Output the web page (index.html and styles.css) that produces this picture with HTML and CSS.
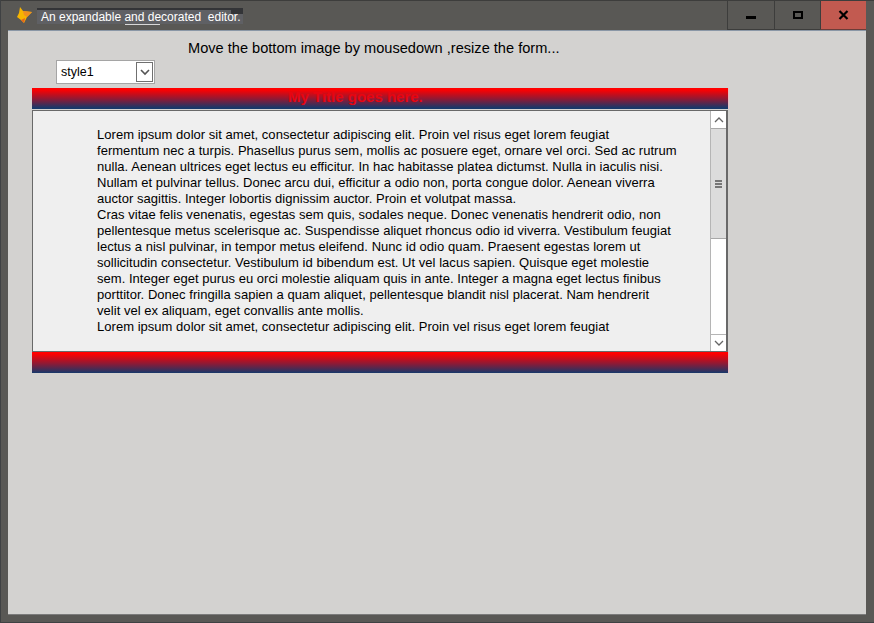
FILE: index.html
```html
<!DOCTYPE html>
<html lang="en">
<head>
<meta charset="utf-8">
<title>An expandable and decorated editor.</title>
<link rel="stylesheet" href="styles.css">
</head>
<body>
<div class="window">
  <header class="titlebar">
    <svg class="app-icon" width="18" height="17" viewBox="0 0 18 17" aria-hidden="true">
      <path d="M4 0 L7 4 L16 5 L11 10 L8 16 L5 13 L1 10 L3 6 Z" fill="#f7b500"/>
      <path d="M7 4 L16 5 L11 10 L8 8 Z" fill="#ef8f1f"/>
      <path d="M5 13 L9 11 L8 16 Z" fill="#e5661c"/>
    </svg>
    <div class="title-wrap"><span class="title-text">An expandable <span class="underlined">and de</span>corated&nbsp; editor.</span></div>
    <div class="controls">
      <div class="control control-min"><span class="min-glyph"></span></div>
      <div class="control control-max"><span class="max-glyph"></span></div>
      <div class="control close">
        <svg width="11" height="10" viewBox="0 0 11 10" aria-hidden="true"><path d="M1.500 1 L9.500 9 M9.500 1 L1.500 9" stroke="#000" stroke-width="2.200" fill="none"/></svg>
      </div>
    </div>
  </header>
  <main class="client">
    <h1 class="hint">Move the bottom image by mousedown ,resize the form...</h1>
    <div class="select-box">
      <span class="select-value">style1</span>
      <span class="select-btn">
        <svg width="10" height="7" viewBox="0 0 10 7" aria-hidden="true"><path d="M1 1 L5 5 L9 1" stroke="#555" stroke-width="1.600" fill="none"/></svg>
      </span>
    </div>
    <section class="editor">
      <div class="band band-top"><span class="band-title">My Title goes here.</span></div>
      <div class="edit-area">
        <div class="edit-text">
          <div>Lorem ipsum dolor sit amet, consectetur adipiscing elit. Proin vel risus eget lorem feugiat</div>
          <div>fermentum nec a turpis. Phasellus purus sem, mollis ac posuere eget, ornare vel orci. Sed ac rutrum</div>
          <div>nulla. Aenean ultrices eget lectus eu efficitur. In hac habitasse platea dictumst. Nulla in iaculis nisi.</div>
          <div>Nullam et pulvinar tellus. Donec arcu dui, efficitur a odio non, porta congue dolor. Aenean viverra</div>
          <div>auctor sagittis. Integer lobortis dignissim auctor. Proin et volutpat massa.</div>
          <div>Cras vitae felis venenatis, egestas sem quis, sodales neque. Donec venenatis hendrerit odio, non</div>
          <div>pellentesque metus scelerisque ac. Suspendisse aliquet rhoncus odio id viverra. Vestibulum feugiat</div>
          <div>lectus a nisl pulvinar, in tempor metus eleifend. Nunc id odio quam. Praesent egestas lorem ut</div>
          <div>sollicitudin consectetur. Vestibulum id bibendum est. Ut vel lacus sapien. Quisque eget molestie</div>
          <div>sem. Integer eget purus eu orci molestie aliquam quis in ante. Integer a magna eget lectus finibus</div>
          <div>porttitor. Donec fringilla sapien a quam aliquet, pellentesque blandit nisl placerat. Nam hendrerit</div>
          <div>velit vel ex aliquam, eget convallis ante mollis.</div>
          <div>Lorem ipsum dolor sit amet, consectetur adipiscing elit. Proin vel risus eget lorem feugiat</div>
        </div>
        <div class="scrollbar">
          <div class="sb-btn sb-up"><svg width="10" height="6" viewBox="0 0 10 6" aria-hidden="true"><path d="M1 5 L5 1 L9 5" stroke="#666" stroke-width="1.300" fill="none"/></svg></div>
          <div class="sb-thumb"><span class="grip"></span><span class="grip"></span><span class="grip"></span></div>
          <div class="sb-track"></div>
          <div class="sb-btn sb-down"><svg width="10" height="6" viewBox="0 0 10 6" aria-hidden="true"><path d="M1 1 L5 5 L9 1" stroke="#666" stroke-width="1.300" fill="none"/></svg></div>
        </div>
      </div>
      <div class="band band-bottom"></div>
    </section>
  </main>
</div>
</body>
</html>
```
FILE: styles.css
```css
* { box-sizing: border-box; }
html, body { margin: 0; height: 100%; overflow: hidden; }
body { background: #595855; font-family: "Liberation Sans", Arial, sans-serif; color: #000; }
.window { width: 874px; height: 623px; display: flex; flex-direction: column; border-left: 1px solid #3f4143; border-bottom: 1px solid #3f4143; }
.titlebar { height: 30px; flex: none; display: flex; align-items: flex-start; border-top: 1px solid #3d3d3c; }
.app-icon { margin: 6px 0 0 15px; flex: none; }
.title-wrap { position: relative; margin: 7px 0 0 3px; width: 206px; height: 16px; background: #5f6064; flex: none; }
.title-wrap::before, .title-wrap::after { content: ""; position: absolute; top: 0; height: 6px; background: #333437; }
.title-wrap::before { left: 0; width: 206px; height: 2px; }
.title-wrap::after { right: 0; width: 12px; }
.title-text { position: relative; z-index: 1; display: block; color: #fff; font-size: 12px; line-height: 14px; padding: 2px 0 0 4px; white-space: nowrap; }
.underlined { box-shadow: 0 2px 0 -1px #d8d8d8; }
.controls { margin-left: auto; margin-right: 8px; display: flex; height: 29px; }
.control { height: 29px; display: flex; align-items: center; justify-content: center; border-left: 1px solid #3d3d3c; border-bottom: 1px solid #3d3d3c; background: #595855; }
.control-min { width: 47px; }
.control-max { width: 46px; }
.close { background: #c25a50; border-bottom-color: #6b3c38; width: 46px; }
.min-glyph { width: 10px; height: 3px; background: #000; margin-top: 5px; }
.max-glyph { width: 10px; height: 8px; border: 2px solid #000; margin-top: -1px; }
.client { flex: none; width: 858px; height: 585px; margin-left: 7px; background: #d3d2d0; border-top: 1px solid #8a97a6; border-bottom: 1px solid #7b7b7b; padding: 9px 0 0 24px; }
.hint { margin: 0 0 0 156px; font-weight: 400; font-size: 14.6px; line-height: 17px; color: #000; white-space: nowrap; }
.select-box { margin: 3px 0 0 24px; width: 99px; height: 24px; background: #fff; border: 1px solid #a5a5a5; display: flex; align-items: center; justify-content: space-between; padding: 0 1px 0 4px; font-size: 12.500px; }
.select-btn { width: 17px; height: 20px; border: 1px solid #707070; background: #fff; display: flex; align-items: center; justify-content: center; }
.editor { margin-top: 4px; width: 696px; }
.band { background: linear-gradient(#ff0000 8%, #8e1a35 55%, #16386a 100%); box-shadow: 1px 0 0 #e8c0c4; }
.band-top { height: 21px; text-align: left; padding-left: 256px; border-bottom: 1px solid #16386a; }
.band-title { color: #e80510; font-size: 15px; font-weight: 700; line-height: 18px; display: block; white-space: nowrap; }
.band-bottom { height: 21px; }
.edit-area { margin-top: 1px; height: 242px; background: #efefef; border: 1px solid #696969; border-right-width: 2px; display: flex; overflow: hidden; }
.edit-text { flex: 1; padding: 16px 0 0 64px; font-size: 13px; letter-spacing: .03px; line-height: 16px; white-space: nowrap; overflow: hidden; }
.scrollbar { width: 16px; flex: none; display: flex; flex-direction: column; border-left: 1px solid #b5b5b5; background: #fff; }
.sb-btn { height: 17px; flex: none; background: #fff; display: flex; align-items: center; justify-content: center; }
.sb-thumb { height: 111px; flex: none; background: #dcdcdc; border-top: 1px solid #a8a8a8; border-bottom: 1px solid #a8a8a8; display: flex; flex-direction: column; align-items: center; justify-content: center; gap: 1px; }
.grip { width: 7px; height: 2px; background: #777; }
.sb-track { flex: 1; background: #fff; }
.sb-down { border-top: 1px solid #b5b5b5; }
```
